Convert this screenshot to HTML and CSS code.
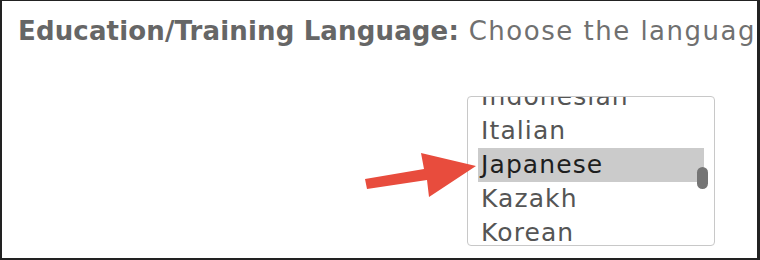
FILE: index.html
```html
<!DOCTYPE html>
<html>
<head>
    <title>Education/Training Language</title>
    <link rel="stylesheet" href="styles.css">
</head>
<body>
    <div class="frame">
        <p class="field"><b>Education/Training Language:</b> Choose the language</p>
        <div class="picker">
            <div class="listbox">
                <ul class="options">
                    <li>Indonesian</li>
                    <li>Italian</li>
                    <li class="selected">Japanese</li>
                    <li>Kazakh</li>
                    <li>Korean</li>
                </ul>
                <span class="thumb"></span>
            </div>
        </div>
        <svg class="pointer" width="760" height="260" viewBox="0 0 760 260">
            <polygon points="365,179 424,169 421,153 476,166 429,197 427,180 367,189" fill="#e84c3d"/>
        </svg>
    </div>
</body>
</html>
```

FILE: styles.css
```css
body {
    margin: 0;
    background-color: white;
    font-family: "DejaVu Sans", sans-serif;
}
.frame {
    position: relative;
    width: 760px;
    height: 260px;
    box-sizing: border-box;
    border-style: solid;
    border-color: #222;
    border-width: 1px 3px 2px 2px;
    overflow: hidden;
}
.field {
    margin: 0;
    padding: 13px 0 0 16px;
    font-size: 26px;
    line-height: 34px;
    color: #707070;
    white-space: nowrap;
    letter-spacing: 1.5px;
}
.field b {
    color: #666;
    letter-spacing: 0.15px;
}
.picker {
    display: flex;
    justify-content: flex-end;
    padding: 48px 42px 0 0;
}
.listbox {
    position: relative;
    width: 248px;
    height: 150px;
    box-sizing: border-box;
    border: 1px solid #c8c8c8;
    border-radius: 4px;
    overflow: hidden;
    padding: 0 10px;
}
.options {
    list-style: none;
    margin: -17px 0 0 0;
    padding: 0;
}
.options li {
    height: 34px;
    line-height: 34px;
    padding-left: 3px;
    font-size: 25px;
    letter-spacing: 1.1px;
    color: #555;
}
.options li.selected {
    background-color: #cbcbcb;
    color: #1e1e1e;
}
.thumb {
    position: absolute;
    right: 6px;
    top: 70px;
    width: 11px;
    height: 22px;
    border-radius: 6px;
    background-color: #757575;
}
.pointer {
    position: absolute;
    left: -2px;
    top: -1px;
}
```
